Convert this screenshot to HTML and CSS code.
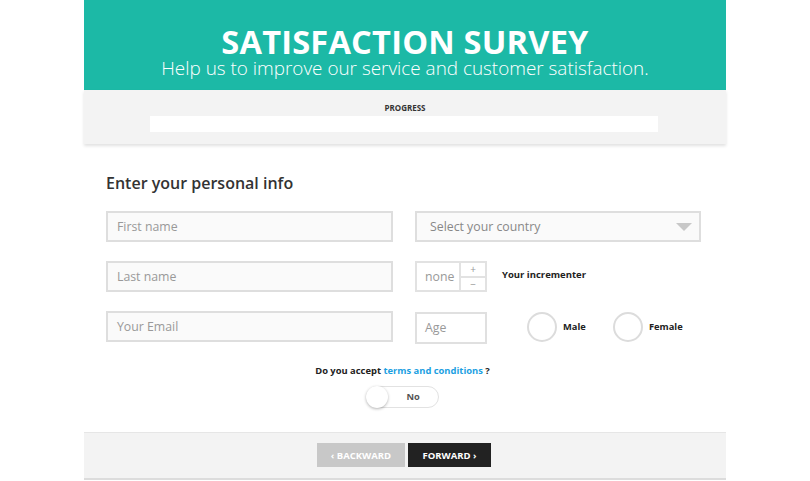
FILE: index.html
```html
<!DOCTYPE html>
<html>
<head>
<meta charset="utf-8">
<link rel="stylesheet" href="styles.css">
</head>
<body>
<div class="wrap">
  <header class="hero">
    <h1 class="title">SATISFACTION SURVEY</h1>
    <p class="subtitle">Help us to improve our service and customer satisfaction.</p>
  </header>
  <section class="progress">
    <div class="progress-label">PROGRESS</div>
    <div class="progress-bar"></div>
  </section>
  <main class="form">
    <h2 class="form-title">Enter your personal info</h2>
    <div class="grid">
      <div class="col">
        <div class="field">First name</div>
        <div class="field">Last name</div>
        <div class="field">Your Email</div>
      </div>
      <div class="col">
        <div class="field select">Select your country<span class="caret"></span></div>
        <div class="row">
          <div class="incr">
            <div class="incr-val">none</div>
            <div class="incr-btns"><span>+</span><span>−</span></div>
          </div>
          <span class="incr-label">Your incrementer</span>
        </div>
        <div class="row">
          <div class="field age">Age</div>
          <div class="radios">
            <label class="radio"><span class="circle"></span>Male</label>
            <label class="radio"><span class="circle"></span>Female</label>
          </div>
        </div>
      </div>
    </div>
    <div class="terms">Do you accept <a class="link">terms and conditions</a> ?</div>
    <div class="toggle-wrap">
      <div class="toggle"><span class="knob"></span><span class="toggle-text">No</span></div>
    </div>
  </main>
  <footer class="foot">
    <button class="btn back">‹ BACKWARD</button>
    <button class="btn fwd">FORWARD ›</button>
  </footer>
</div>
</body>
</html>
```
FILE: styles.css
```css
* { box-sizing: border-box; }
html, body { margin: 0; padding: 0; background: #fff; }
body { font-family: "Open Sans", "Liberation Sans", sans-serif; color: #333; }
.wrap { width: 642px; margin: 0 auto; height: 481px; display: flex; flex-direction: column; }
.hero { background: #1cb9a6; height: 90px; text-align: center; color: #fff; padding-top: 26px; }
.title { margin: 0; font-size: 32.6px; font-weight: 700; line-height: 32px; letter-spacing: 0.2px; }
.subtitle { margin: 0; font-size: 18.9px; font-weight: 300; line-height: 20px; }
.progress { background: #f3f3f3; height: 54px; padding-top: 12px; box-shadow: 0 2px 3px rgba(0,0,0,0.12); position: relative; }
.progress-label { text-align: center; font-size: 8px; font-weight: 700; color: #333; line-height: 12px; }
.progress-bar { width: 508px; height: 16px; background: #fff; margin: 2px auto 0 66px; }
.form { padding: 28px 25px 0 22px; flex: 1; }
.form-title { margin: 0 0 17px; font-size: 16px; font-weight: 600; color: #333; line-height: 22px; }
.grid { display: grid; grid-template-columns: 287px 286px; column-gap: 22px; }
.col { display: flex; flex-direction: column; gap: 19px; }
.field { height: 31px; border: 2px solid #dedede; background: #fafafa; color: #999; font-size: 12.3px; line-height: 27px; padding-left: 9px; position: relative; }
.select { padding-left: 13px; color: #888; }
.caret { position: absolute; right: 7px; top: 10px; width: 0; height: 0; border-left: 8px solid transparent; border-right: 8px solid transparent; border-top: 8px solid #c8c8c8; }
.row { display: flex; align-items: center; height: 31px; }
.incr { display: flex; height: 31px; border: 2px solid #e2e2e2; background: #fff; }
.incr-val { width: 44px; color: #999; font-size: 12.3px; line-height: 27px; padding-left: 8px; border-right: 2px solid #e2e2e2; }
.incr-btns { width: 24px; display: flex; flex-direction: column; }
.incr-btns span { flex: 1; text-align: center; font-size: 10px; line-height: 13px; color: #999; }
.incr-btns span:first-child { border-bottom: 2px solid #e2e2e2; }
.incr-label { margin-left: 15px; font-size: 9.5px; font-weight: 700; color: #222; margin-top: -5px; }
.age { width: 72px; padding-left: 8px; height: 32px; margin-top: 2px; background: #fff; border-color: #e0e0e0; }
.radios { display: flex; margin-left: 40px; gap: 0; }
.radio { display: flex; align-items: center; font-size: 9.3px; font-weight: 700; color: #222; width: 86px; }
.circle { width: 30px; height: 30px; border-radius: 50%; border: 2px solid #dcdcdc; background: #fff; margin-right: 6px; }
.terms { text-align: center; font-size: 9.4px; font-weight: 700; color: #222; margin-top: 23px; line-height: 12px; margin-left: -2px; }
.link { color: #1ba0e2; }
.toggle-wrap { display: flex; justify-content: center; margin-top: 9px; }
.toggle { width: 73px; height: 22px; border: 1px solid #e2e2e2; border-radius: 11px; position: relative; margin-left: -3px; background: #fff; }
.knob { position: absolute; left: -1px; top: -1px; width: 22px; height: 22px; border-radius: 50%; background: #fff; box-shadow: 0 1px 3px rgba(0,0,0,0.3); }
.toggle-text { position: absolute; left: 40px; top: 3px; font-size: 9.3px; font-weight: 700; color: #555; }
.foot { background: #f3f3f3; border-top: 1px solid #e6e6e6; border-bottom: 2px solid #dcdcdc; height: 48px; display: flex; justify-content: center; align-items: flex-start; padding-top: 10px; gap: 3px; margin-bottom: 1px; padding-right: 2px; }
.btn { border: 0; height: 24px; font-family: inherit; font-size: 9.5px; font-weight: 700; color: #fff; padding: 0; }
.back { background: #c8c8c8; width: 88px; }
.fwd { background: #222; width: 83px; }
```
